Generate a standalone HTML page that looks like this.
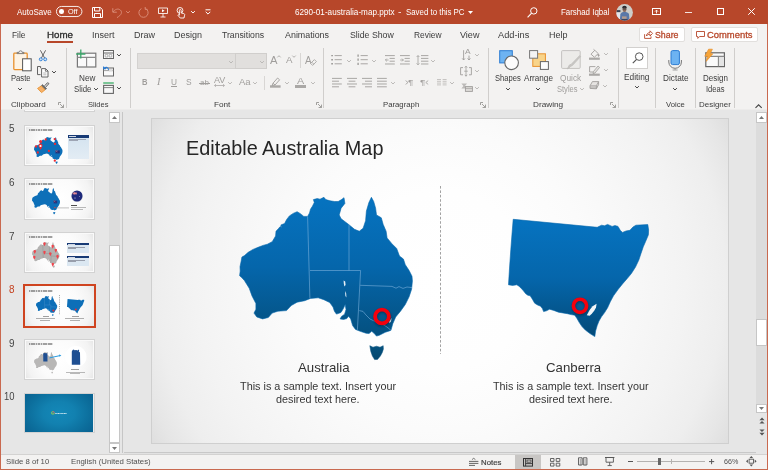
<!DOCTYPE html>
<html lang="en">
<head>
<meta charset="utf-8">
<title>6290-01-australia-map.pptx - PowerPoint</title>
<style>
*{box-sizing:border-box;margin:0;padding:0}
html,body{width:768px;height:470px;overflow:hidden;background:#e6e6e6}
body{font-family:"Liberation Sans","DejaVu Sans",sans-serif;font-size:9px;color:#444;position:relative}
#win{position:absolute;left:0;top:0;width:768px;height:470px;overflow:hidden;background:#e6e6e6}
.abs{position:absolute}
.t{position:absolute;white-space:nowrap;transform-origin:0 50%}
svg{position:absolute;overflow:visible}
#titlebar{position:absolute;left:0;top:0;width:768px;height:24px;background:#b7472a}
#tabs{position:absolute;left:0;top:24px;width:768px;height:23px;background:#f3f2f1}
#ribbon{position:absolute;left:0;top:47px;width:768px;height:63px;background:linear-gradient(#f3f2f1 0,#f3f2f1 61.6px,#eae9e8 63px)}
#status{position:absolute;left:0;top:454px;width:768px;height:16px;background:#f3f2f1;border-top:1px solid #d3d2d1}
.sep{position:absolute;width:1px;background:#d0cecc;top:48px;height:60px}
.frame{position:absolute;pointer-events:none;z-index:50}
</style>
</head>
<body>
<div id="win">
<div class="abs" style="left:0px;top:110px;width:122px;height:344px;background:#e6e6e6"></div>
<div class="abs" style="left:24px;top:80px;width:70.6px;height:32.4px;background:radial-gradient(circle 41px at 50% 50%,#ffffff 0,#fbfbfb 20px,#f3f3f3 32px,#e2e2e2 41px);border:1px solid #d2d2d2;box-shadow:inset 0 0 0 1px #fafafa"></div>
<div class="abs" style="left:24px;top:124.8px;width:70.6px;height:40.9px;background:radial-gradient(circle 41px at 50% 50%,#ffffff 0,#fbfbfb 20px,#f3f3f3 32px,#e2e2e2 41px);border:1px solid #d2d2d2;box-shadow:inset 0 0 0 1px #fafafa"></div>
<span class="t" style="left:9.18px;top:121.49px;font-size:11.00px;line-height:14px;height:14px;color:#444;transform:scaleX(0.898);">5</span>
<div class="abs" style="left:29.4px;top:129px;width:23.4px;height:2.1px;background:repeating-linear-gradient(90deg,#444 0,#444 1.2px,rgba(68,68,68,.35) 1.2px,rgba(68,68,68,.35) 1.7px);opacity:.5"></div>
<svg style="left:33.8px;top:136.5px;" width="40" height="30" viewBox="0 0 40 30"><polygon points="0.1,11.5 0.3,10.5 0.4,9.9 0.8,9.6 1.4,9.1 2.2,8.6 3.2,8.2 3.9,7.9 4.6,7.7 5.4,7.3 5.9,6.4 6.0,5.6 6.4,5.2 6.7,4.8 7.0,5.0 6.8,4.6 7.4,4.3 7.7,3.7 8.2,3.1 8.8,2.7 9.5,2.4 10.0,2.7 10.6,3.2 11.2,3.2 11.5,2.6 11.7,2.0 12.0,1.5 12.3,0.9 12.2,0.4 12.8,0.2 13.3,0.3 13.9,0.0 14.2,0.4 14.9,0.6 15.6,0.7 16.3,0.7 16.8,0.4 17.2,0.1 17.4,1.0 16.7,1.8 16.4,2.9 16.7,3.5 18.0,4.5 19.0,5.3 19.8,5.6 20.4,5.1 20.8,3.9 20.9,2.3 21.3,0.9 21.7,0.0 22.1,0.7 22.4,1.8 22.6,2.9 23.4,3.4 23.7,4.5 24.2,5.6 24.3,6.7 25.1,7.7 25.9,8.4 26.4,9.7 27.0,10.2 27.3,11.1 28.0,12.1 28.4,13.0 28.5,13.8 28.4,15.2 28.0,16.4 27.3,17.7 26.5,18.8 25.8,19.8 25.3,20.9 25.0,22.0 24.0,22.3 23.1,22.8 22.6,22.9 22.2,22.4 21.8,22.1 21.4,22.5 20.9,22.4 19.9,22.1 19.1,21.8 18.6,21.2 18.3,20.1 18.0,19.6 17.7,20.0 17.2,20.1 16.6,20.1 16.8,19.7 17.3,19.3 17.6,18.5 17.4,17.7 17.1,18.4 16.7,19.0 16.3,19.2 16.0,19.3 15.6,18.8 15.4,18.1 14.9,17.4 13.9,16.9 13.0,16.6 11.7,16.7 10.7,17.1 9.5,17.3 8.5,17.9 7.7,18.7 6.3,18.8 5.4,19.1 4.7,19.8 3.8,20.1 2.8,19.8 2.4,19.1 2.7,18.5 2.7,17.5 2.0,16.3 1.6,15.0 0.8,13.7 0.3,13.2 0.0,12.9 0.1,12.2" fill="#0d6fb8"/><polygon points="21.5,24.5 22.0,24.7 22.6,24.6 23.2,24.7 23.7,24.5 23.7,25.0 23.5,25.6 23.2,26.2 22.8,26.7 22.3,26.8 21.9,26.2 21.6,25.4" fill="#0d6fb8"/><circle cx="11.7" cy="2.5" r="1.15" fill="#ee2a32"/><circle cx="20.7" cy="2.1" r="1.15" fill="#ee2a32"/><circle cx="21" cy="6.9" r="1.15" fill="#ee2a32"/><circle cx="2" cy="9.5" r="1.15" fill="#ee2a32"/><circle cx="3.8" cy="15.5" r="1.15" fill="#ee2a32"/><circle cx="14.9" cy="13.9" r="1.15" fill="#ee2a32"/><circle cx="20.8" cy="23.7" r="1.15" fill="#ee2a32"/><circle cx="6.6" cy="4.6" r="1.5" fill="#ee2a32"/><path d="M4.7 9.4 a2 2 0 1 1 3.6 0 L6.7 13 Z" fill="#ee2a32"/><circle cx="6.5" cy="9" r="1.1" fill="#fff"/><rect x="21.4" y="13.4" width="4.4" height="3" fill="#20307a"/><path d="M21.4 13.4 L23.6 15 M23.6 13.4 L21.4 15" stroke="#e88" stroke-width="0.4"/></svg>
<div class="abs" style="left:68.1px;top:135.1px;width:21px;height:2.8px;background:#173a75"></div>
<div class="abs" style="left:68.1px;top:137.9px;width:21px;height:21px;background:linear-gradient(#d5e4f0,#e3ecf4)"></div>
<div class="abs" style="left:69px;top:136.308px;width:7px;height:0.992px;background:#fff;opacity:.8"></div>
<div class="abs" style="left:69px;top:138.932px;width:17px;height:0.868px;background:#667;opacity:.5"></div>
<div class="abs" style="left:69px;top:140.432px;width:9.4px;height:0.868px;background:#667;opacity:.5"></div>
<div class="abs" style="left:24px;top:178.3px;width:70.6px;height:41.3px;background:radial-gradient(circle 41px at 50% 50%,#ffffff 0,#fbfbfb 20px,#f3f3f3 32px,#e2e2e2 41px);border:1px solid #d2d2d2;box-shadow:inset 0 0 0 1px #fafafa"></div>
<span class="t" style="left:9.18px;top:175.29px;font-size:11.00px;line-height:14px;height:14px;color:#444;transform:scaleX(0.898);">6</span>
<div class="abs" style="left:29.4px;top:182.7px;width:23.4px;height:2.1px;background:repeating-linear-gradient(90deg,#444 0,#444 1.2px,rgba(68,68,68,.35) 1.2px,rgba(68,68,68,.35) 1.7px);opacity:.5"></div>
<svg style="left:32.2px;top:188.4px;" width="40" height="30" viewBox="0 0 40 30"><polygon points="0.1,11.2 0.3,10.3 0.4,9.7 0.8,9.4 1.4,8.9 2.2,8.4 3.1,8.1 3.8,7.8 4.5,7.6 5.3,7.2 5.8,6.3 5.9,5.5 6.3,5.1 6.6,4.7 6.8,4.9 6.7,4.5 7.3,4.2 7.6,3.6 8.1,3.0 8.7,2.6 9.3,2.3 9.8,2.6 10.4,3.1 11.0,3.1 11.3,2.5 11.5,1.9 11.8,1.5 12.1,0.8 12.0,0.4 12.6,0.2 13.0,0.3 13.7,0.0 14.0,0.4 14.6,0.6 15.4,0.7 16.0,0.7 16.5,0.4 16.9,0.1 17.1,1.0 16.4,1.8 16.1,2.9 16.4,3.5 17.7,4.4 18.6,5.2 19.4,5.5 20.0,5.0 20.4,3.8 20.5,2.2 20.9,0.8 21.4,0.0 21.7,0.7 22.0,1.8 22.2,2.9 23.0,3.3 23.3,4.4 23.7,5.5 23.9,6.6 24.7,7.5 25.5,8.3 25.9,9.5 26.5,10.0 26.8,10.9 27.5,11.9 27.9,12.8 28.0,13.6 27.9,14.9 27.5,16.1 26.8,17.4 26.1,18.5 25.3,19.4 24.8,20.5 24.5,21.6 23.6,21.9 22.6,22.3 22.2,22.5 21.8,22.0 21.4,21.7 21.0,22.1 20.5,22.0 19.5,21.7 18.8,21.4 18.3,20.8 18.0,19.7 17.7,19.3 17.4,19.7 16.8,19.8 16.3,19.7 16.5,19.3 17.0,18.9 17.2,18.2 17.1,17.4 16.8,18.0 16.4,18.6 16.0,18.8 15.7,18.9 15.4,18.5 15.1,17.8 14.6,17.1 13.7,16.6 12.7,16.3 11.5,16.4 10.5,16.8 9.3,17.0 8.4,17.5 7.6,18.4 6.2,18.5 5.3,18.8 4.6,19.5 3.7,19.7 2.8,19.4 2.3,18.8 2.6,18.1 2.6,17.2 2.0,16.0 1.6,14.7 0.8,13.5 0.3,13.0 0.0,12.7 0.1,11.9" fill="#0d6fb8"/><polygon points="21.1,24.0 21.6,24.3 22.2,24.1 22.7,24.3 23.3,24.0 23.3,24.6 23.1,25.1 22.8,25.7 22.3,26.3 21.9,26.3 21.5,25.7 21.3,25.0" fill="#0d6fb8"/><path d="M23 19.9 H37" stroke="#777" stroke-width="0.45"/><rect x="21.6" y="12.6" width="3.6" height="2.8" fill="#25357e"/><path d="M21.6 12.6 L23.4 14 M23.4 12.6 L21.6 14" stroke="#e66" stroke-width="0.4"/><circle cx="22.8" cy="19.6" r="0.7" fill="#e33"/></svg>
<svg style="left:71.4px;top:190.3px;" width="12" height="12" viewBox="0 0 12 12"><circle cx="6" cy="6.4" r="5.7" fill="#000" opacity="0.12"/><circle cx="6" cy="6" r="5.5" fill="#1f2a7c"/><path d="M1.6 3.4 H6 M3.8 2 V4.8" stroke="#f08a8a" stroke-width="0.9"/><path d="M1.8 2.2 L5.8 4.6 M5.8 2.2 L1.8 4.6" stroke="#e9a" stroke-width="0.4"/><circle cx="4" cy="8" r="0.5" fill="#fff"/><circle cx="8.6" cy="6.4" r="0.4" fill="#fff"/></svg>
<div class="abs" style="left:71px;top:205.246px;width:6px;height:1.054px;background:#222;opacity:.8"></div>
<div class="abs" style="left:71px;top:207.094px;width:14.7px;height:0.806px;background:#777;opacity:.5"></div>
<div class="abs" style="left:71px;top:208.794px;width:12px;height:0.806px;background:#777;opacity:.5"></div>
<div class="abs" style="left:24px;top:232.3px;width:70.6px;height:40.4px;background:radial-gradient(circle 41px at 50% 50%,#ffffff 0,#fbfbfb 20px,#f3f3f3 32px,#e2e2e2 41px);border:1px solid #d2d2d2;box-shadow:inset 0 0 0 1px #fafafa"></div>
<span class="t" style="left:9.18px;top:229.09px;font-size:11.00px;line-height:14px;height:14px;color:#444;transform:scaleX(0.898);">7</span>
<div class="abs" style="left:29.4px;top:236.2px;width:23.4px;height:2.1px;background:repeating-linear-gradient(90deg,#444 0,#444 1.2px,rgba(68,68,68,.35) 1.2px,rgba(68,68,68,.35) 1.7px);opacity:.5"></div>
<svg style="left:32.2px;top:241.6px;" width="40" height="30" viewBox="0 0 40 30"><polygon points="0.1,11.0 0.3,10.1 0.4,9.5 0.8,9.3 1.4,8.7 2.1,8.3 3.0,7.9 3.7,7.6 4.4,7.5 5.2,7.1 5.7,6.2 5.8,5.4 6.2,5.0 6.5,4.6 6.7,4.8 6.6,4.4 7.2,4.2 7.5,3.6 7.9,3.0 8.5,2.6 9.1,2.3 9.6,2.6 10.2,3.0 10.8,3.0 11.1,2.5 11.3,1.9 11.6,1.4 11.9,0.8 11.7,0.4 12.3,0.2 12.8,0.3 13.4,0.0 13.7,0.4 14.4,0.6 15.1,0.7 15.7,0.7 16.2,0.4 16.6,0.1 16.7,1.0 16.1,1.7 15.8,2.8 16.1,3.4 17.3,4.3 18.3,5.1 19.0,5.4 19.6,4.9 20.0,3.7 20.2,2.2 20.6,0.8 21.0,0.0 21.3,0.7 21.6,1.7 21.8,2.8 22.5,3.3 22.8,4.3 23.3,5.4 23.5,6.5 24.2,7.4 25.0,8.1 25.4,9.3 26.0,9.8 26.3,10.7 27.0,11.6 27.4,12.5 27.5,13.3 27.3,14.6 27.0,15.8 26.3,17.0 25.6,18.1 24.8,19.0 24.4,20.1 24.1,21.2 23.2,21.5 22.2,21.9 21.8,22.1 21.4,21.6 21.0,21.3 20.6,21.7 20.1,21.6 19.2,21.3 18.4,21.0 18.0,20.4 17.7,19.3 17.3,18.9 17.0,19.3 16.5,19.4 16.0,19.3 16.2,18.9 16.7,18.6 16.9,17.8 16.8,17.0 16.5,17.7 16.1,18.3 15.7,18.5 15.4,18.6 15.1,18.1 14.9,17.4 14.3,16.7 13.4,16.3 12.5,16.0 11.3,16.1 10.4,16.4 9.1,16.7 8.2,17.2 7.5,18.0 6.1,18.1 5.2,18.4 4.6,19.1 3.7,19.3 2.7,19.0 2.3,18.4 2.6,17.8 2.6,16.9 2.0,15.7 1.5,14.5 0.8,13.2 0.3,12.7 0.0,12.5 0.1,11.7" fill="#b3b2b1"/><polygon points="20.7,23.6 21.2,23.8 21.8,23.7 22.3,23.8 22.8,23.6 22.9,24.1 22.7,24.7 22.4,25.2 21.9,25.8 21.5,25.8 21.1,25.2 20.9,24.5" fill="#b3b2b1"/><path d="M10.8 3 L11.2 16 M11.2 11.6 H19.3 M17.4 4.4 V11.6 M19.3 11.6 L18.8 21 M19.3 14 L27.4 14.4" fill="none" stroke="#8a8a8a" stroke-width="0.4"/><path d="M12.5 4.3 l-1.1 -2.3 a1.25 1.25 0 1 1 2.2 0 Z" fill="#f0444c"/><path d="M20.7 6.8 l-1.1 -2.3 a1.25 1.25 0 1 1 2.2 0 Z" fill="#f0444c"/><path d="M2.8 12.1 l-1.1 -2.3 a1.25 1.25 0 1 1 2.2 0 Z" fill="#f0444c"/><path d="M12.5 12.8 l-1.1 -2.3 a1.25 1.25 0 1 1 2.2 0 Z" fill="#f0444c"/><path d="M18.3 14.3 l-1.1 -2.3 a1.25 1.25 0 1 1 2.2 0 Z" fill="#f0444c"/><path d="M23.8 10.8 l-1.1 -2.3 a1.25 1.25 0 1 1 2.2 0 Z" fill="#f0444c"/><path d="M2.3 17.8 l-1.1 -2.3 a1.25 1.25 0 1 1 2.2 0 Z" fill="#f0444c"/><path d="M25.5 17 l-1.1 -2.3 a1.25 1.25 0 1 1 2.2 0 Z" fill="#f0444c"/><path d="M20.8 24.8 l-1.1 -2.3 a1.25 1.25 0 1 1 2.2 0 Z" fill="#f0444c"/></svg>
<div class="abs" style="left:66.6px;top:242.9px;width:22.3px;height:2.2px;background:#173a75"></div>
<div class="abs" style="left:66.6px;top:245.1px;width:22.3px;height:8px;background:#dbe7f1"></div>
<div class="abs" style="left:67.6px;top:243.77px;width:7.4px;height:0.93px;background:#fff;opacity:.8"></div>
<div class="abs" style="left:67.6px;top:246.694px;width:17px;height:0.806px;background:#556;opacity:.5"></div>
<div class="abs" style="left:67.6px;top:248.194px;width:8.8px;height:0.806px;background:#556;opacity:.5"></div>
<div class="abs" style="left:66.6px;top:255.9px;width:22.3px;height:2.2px;background:#173a75"></div>
<div class="abs" style="left:66.6px;top:258.1px;width:22.3px;height:8px;background:#dbe7f1"></div>
<div class="abs" style="left:67.6px;top:256.77px;width:7.4px;height:0.93px;background:#fff;opacity:.8"></div>
<div class="abs" style="left:67.6px;top:259.694px;width:17px;height:0.806px;background:#556;opacity:.5"></div>
<div class="abs" style="left:67.6px;top:261.194px;width:8.8px;height:0.806px;background:#556;opacity:.5"></div>
<div class="abs" style="left:22.7px;top:284px;width:73.4px;height:44px;background:#cf4420"></div>
<div class="abs" style="left:24.6px;top:285.9px;width:69.6px;height:40.2px;background:#fff"></div>
<div class="abs" style="left:25px;top:286.3px;width:68.8px;height:39.3px;background:radial-gradient(circle 41px at 50% 50%,#ffffff 0,#fbfbfb 20px,#f3f3f3 32px,#e2e2e2 41px);border:0"></div>
<span class="t" style="left:9.18px;top:282.49px;font-size:11.00px;line-height:14px;height:14px;color:#c43e1c;transform:scaleX(0.898);">8</span>
<div class="abs" style="left:29.4px;top:289.7px;width:23.4px;height:2.1px;background:repeating-linear-gradient(90deg,#444 0,#444 1.2px,rgba(68,68,68,.35) 1.2px,rgba(68,68,68,.35) 1.7px);opacity:.5"></div>
<svg style="left:36px;top:295.9px;" width="40" height="30" viewBox="0 0 40 30"><polygon points="0.0,8.5 0.2,7.8 0.3,7.3 0.6,7.2 1.1,6.7 1.6,6.4 2.3,6.1 2.9,5.9 3.4,5.8 4.0,5.4 4.4,4.7 4.5,4.2 4.8,3.8 5.0,3.6 5.2,3.7 5.1,3.4 5.5,3.2 5.8,2.7 6.1,2.3 6.6,2.0 7.1,1.8 7.4,2.0 7.9,2.3 8.3,2.3 8.6,1.9 8.7,1.5 8.9,1.1 9.2,0.6 9.1,0.3 9.5,0.2 9.9,0.2 10.3,0.0 10.6,0.3 11.1,0.4 11.6,0.5 12.1,0.5 12.5,0.3 12.8,0.0 12.9,0.7 12.5,1.3 12.2,2.2 12.5,2.6 13.4,3.3 14.1,3.9 14.7,4.2 15.2,3.8 15.5,2.9 15.6,1.7 15.9,0.6 16.2,0.0 16.5,0.5 16.7,1.3 16.8,2.2 17.4,2.5 17.6,3.3 18.0,4.2 18.1,5.0 18.7,5.7 19.3,6.3 19.6,7.2 20.1,7.6 20.3,8.3 20.8,9.0 21.2,9.7 21.2,10.3 21.1,11.3 20.8,12.2 20.3,13.2 19.7,14.0 19.2,14.7 18.8,15.5 18.6,16.3 17.9,16.6 17.2,16.9 16.8,17.0 16.5,16.7 16.2,16.4 15.9,16.7 15.5,16.7 14.8,16.4 14.2,16.2 13.9,15.7 13.6,14.9 13.4,14.6 13.2,14.9 12.8,15.0 12.3,14.9 12.5,14.6 12.9,14.3 13.1,13.8 13.0,13.2 12.7,13.7 12.4,14.1 12.1,14.3 11.9,14.3 11.6,14.0 11.5,13.5 11.1,12.9 10.3,12.6 9.6,12.3 8.7,12.4 8.0,12.7 7.1,12.9 6.3,13.3 5.8,13.9 4.7,14.0 4.0,14.2 3.5,14.7 2.8,14.9 2.1,14.7 1.8,14.2 2.0,13.7 2.0,13.0 1.5,12.1 1.2,11.2 0.6,10.2 0.2,9.8 0.0,9.6 0.1,9.0" fill="#0d6fb8"/><polygon points="16.0,18.2 16.4,18.4 16.8,18.3 17.2,18.4 17.6,18.2 17.6,18.6 17.5,19.0 17.3,19.5 16.9,19.9 16.6,19.9 16.3,19.5 16.1,18.9" fill="#0d6fb8"/><path d="M8.4 2.4 L8.7 12.4 M8.7 9 H14.9 M13.4 3.4 V9 M14.9 9 L14.5 16.2 M14.9 10.8 L21.2 11.1" fill="none" stroke="#5e9ed2" stroke-width="0.3"/><circle cx="17.4" cy="14.6" r="1" fill="#ee2a32"/></svg>
<svg style="left:67.3px;top:298.6px;" width="40" height="30" viewBox="0 0 40 30"><polygon points="0.6,0.0 10.9,1.0 11.4,0.7 11.8,0.8 12.2,0.6 12.7,0.9 13.1,0.8 13.4,0.9 13.7,1.4 14.0,1.6 14.4,1.4 14.9,1.3 15.3,0.9 15.6,0.7 17.1,0.7 17.2,1.3 17.2,1.9 16.8,2.7 16.5,3.4 16.3,4.2 16.0,5.0 15.6,5.9 15.1,6.7 14.5,7.3 14.0,7.9 13.4,8.6 12.9,9.4 12.5,10.1 12.2,10.8 11.8,11.4 11.4,11.9 11.1,12.5 10.9,13.0 10.7,13.7 10.6,14.4 10.0,14.0 9.4,13.6 9.0,13.2 8.7,12.7 8.4,12.2 8.1,11.8 7.7,11.7 7.2,11.6 6.1,11.4 5.6,11.2 5.0,11.0 4.7,11.2 4.3,11.3 4.2,11.0 3.9,10.7 3.6,10.5 3.2,10.3 2.9,9.8 2.7,9.4 2.4,9.3 2.1,9.1 1.8,8.8 1.6,8.5 1.3,8.2 1.0,8.0 0.5,8.1 0.0,8.0 0.1,5.9 0.3,3.7 0.4,1.8" fill="#0d6fb8"/><circle cx="8.8" cy="10.6" r="1" fill="#ee2a32"/></svg>
<svg style="left:59.1px;top:294.8px;" width="1" height="20" viewBox="0 0 1 20"><path d="M0.5 0 V20" stroke="#555" stroke-width="0.5" stroke-dasharray="1.1 1.1"/></svg>
<div class="abs" style="left:42.6px;top:315.546px;width:6.3px;height:1.054px;background:#444;opacity:.5"></div>
<div class="abs" style="left:35.9px;top:317.963px;width:18.7px;height:0.837px;background:#666;opacity:.5"></div>
<div class="abs" style="left:40.2px;top:319.663px;width:9.8px;height:0.837px;background:#666;opacity:.5"></div>
<div class="abs" style="left:72px;top:315.546px;width:6.5px;height:1.054px;background:#444;opacity:.5"></div>
<div class="abs" style="left:65.4px;top:317.963px;width:18.6px;height:0.837px;background:#666;opacity:.5"></div>
<div class="abs" style="left:70px;top:319.663px;width:10px;height:0.837px;background:#666;opacity:.5"></div>
<div class="abs" style="left:24px;top:339.3px;width:70.6px;height:40.4px;background:radial-gradient(circle 41px at 50% 50%,#ffffff 0,#fbfbfb 20px,#f3f3f3 32px,#e2e2e2 41px);border:1px solid #d2d2d2;box-shadow:inset 0 0 0 1px #fafafa"></div>
<span class="t" style="left:9.18px;top:335.99px;font-size:11.00px;line-height:14px;height:14px;color:#444;transform:scaleX(0.898);">9</span>
<div class="abs" style="left:29.4px;top:343.2px;width:23.4px;height:2.1px;background:repeating-linear-gradient(90deg,#444 0,#444 1.2px,rgba(68,68,68,.35) 1.2px,rgba(68,68,68,.35) 1.7px);opacity:.5"></div>
<svg style="left:33.8px;top:352px;" width="40" height="30" viewBox="0 0 40 30"><polygon points="0.1,9.2 0.2,8.4 0.3,7.9 0.6,7.7 1.1,7.3 1.8,6.9 2.5,6.6 3.1,6.4 3.7,6.2 4.3,5.9 4.8,5.1 4.8,4.5 5.2,4.1 5.4,3.9 5.6,4.0 5.5,3.7 6.0,3.5 6.2,3.0 6.6,2.5 7.1,2.1 7.6,1.9 8.0,2.1 8.5,2.5 9.0,2.5 9.3,2.1 9.4,1.6 9.6,1.2 9.9,0.7 9.8,0.3 10.3,0.2 10.7,0.3 11.2,0.0 11.4,0.3 12.0,0.5 12.6,0.6 13.1,0.6 13.5,0.3 13.8,0.1 14.0,0.8 13.4,1.4 13.2,2.3 13.4,2.8 14.5,3.6 15.2,4.2 15.9,4.5 16.4,4.1 16.7,3.1 16.8,1.8 17.1,0.7 17.5,0.0 17.8,0.6 18.0,1.4 18.1,2.3 18.8,2.7 19.0,3.6 19.4,4.5 19.5,5.4 20.2,6.1 20.8,6.8 21.2,7.8 21.7,8.2 22.0,8.9 22.5,9.7 22.8,10.5 22.9,11.1 22.8,12.2 22.5,13.2 22.0,14.2 21.3,15.1 20.7,15.9 20.3,16.7 20.0,17.6 19.3,17.9 18.5,18.3 18.1,18.4 17.8,18.0 17.5,17.8 17.1,18.1 16.7,18.0 16.0,17.8 15.4,17.5 15.0,17.0 14.7,16.1 14.4,15.8 14.2,16.1 13.8,16.2 13.3,16.1 13.5,15.8 13.9,15.5 14.1,14.9 14.0,14.2 13.8,14.7 13.4,15.3 13.1,15.4 12.8,15.5 12.6,15.1 12.4,14.5 11.9,14.0 11.2,13.6 10.4,13.3 9.4,13.4 8.6,13.7 7.6,13.9 6.9,14.3 6.2,15.0 5.1,15.1 4.3,15.3 3.8,15.9 3.0,16.1 2.3,15.9 1.9,15.3 2.2,14.8 2.2,14.1 1.6,13.1 1.3,12.0 0.6,11.0 0.3,10.6 0.0,10.4 0.1,9.8" fill="#b8b7b6"/><polygon points="17.3,19.7 17.7,19.9 18.1,19.7 18.6,19.9 19.0,19.7 19.1,20.1 18.9,20.6 18.7,21.0 18.3,21.5 17.9,21.5 17.6,21.0 17.4,20.4" fill="#b8b7b6"/><path d="M9.2 1.4 L10.4 0.9 L12.2 1.3 L13.4 1.2 L13.5 9.4 H9.3 Z" fill="#1f4f92"/><path d="M15.5 5.9 L26 3.6" stroke="#2a9be0" stroke-width="1"/><path d="M25 2.6 L27.4 3.3 L25.6 4.8 Z" fill="#2a9be0"/></svg>
<svg style="left:64.6px;top:346px;" width="22" height="22" viewBox="0 0 22 22"><circle cx="10.8" cy="10.8" r="10.7" fill="#fff"/><path d="M6.8 5.4 L7.6 4 L8.8 3.6 L9.6 4.2 L11.2 4 L12.6 4.4 L13.6 3.6 L14.2 4.4 L13.8 5.6 L15 6.6 L15.2 18.8 H6.8 Z" fill="#1f4f92"/></svg>
<div class="abs" style="left:70.6px;top:369.208px;width:8.8px;height:0.992px;background:#444;opacity:.5"></div>
<div class="abs" style="left:66px;top:371.894px;width:18.5px;height:0.806px;background:#777;opacity:.5"></div>
<div class="abs" style="left:70px;top:373.194px;width:10px;height:0.806px;background:#777;opacity:.5"></div>
<div class="abs" style="left:24px;top:392.6px;width:70.6px;height:40.9px;background:#ededed;border:1px solid #d2d2d2"></div>
<div class="abs" style="left:25.3px;top:393.8px;width:68.2px;height:38.2px;background:radial-gradient(ellipse 58% 75% at 50% 50%,#1488b8 0%,#1281b0 40%,#0c6e9c 80%,#0a6594 100%)"></div>
<span class="t" style="left:4.18px;top:389.39px;font-size:11.00px;line-height:14px;height:14px;color:#444;transform:scaleX(0.857);">10</span>
<svg style="left:51px;top:411.4px;" width="4" height="4" viewBox="0 0 4 4"><circle cx="1.9" cy="1.9" r="1.7" fill="#9ccf4a"/><path d="M1.9 0.2 A1.7 1.7 0 0 1 3.6 1.9 H1.9 Z" fill="#d44a7a"/><circle cx="1.9" cy="1.9" r="0.8" fill="#1a7fb0"/></svg>
<span class="t" style="left:54.75px;top:410.87px;font-size:2.40px;line-height:5px;height:5px;color:#fff;font-weight:700;transform:scaleX(0.950);">SlideModel</span>
<div class="abs" style="left:109px;top:122px;width:11px;height:322px;background:#dcdcdc"></div>
<div class="abs" style="left:109px;top:112px;width:11px;height:11px;background:#fff;border:1px solid #c6c6c6"></div>
<svg style="left:112px;top:116.2px;" width="5" height="3" viewBox="0 0 5 3"><path d="M0 3 L2.5 0 L5 3 Z" fill="#777"/></svg>
<div class="abs" style="left:109px;top:245px;width:11px;height:198px;background:#fff;border:1px solid #c6c6c6"></div>
<div class="abs" style="left:109px;top:443px;width:11px;height:10px;background:#fff;border:1px solid #c6c6c6"></div>
<svg style="left:112px;top:446.8px;" width="5" height="3" viewBox="0 0 5 3"><path d="M0 0 L2.5 3 L5 0 Z" fill="#777"/></svg>
<div class="abs" style="left:121px;top:110px;width:647px;height:344px;background:#e6e6e6"></div>
<div class="abs" style="left:122px;top:112px;width:1px;height:341px;background:#c6c6c6"></div>
<div class="abs" style="left:124px;top:452px;width:643px;height:1px;background:#c8c8c8"></div>
<div class="abs" style="left:123px;top:453px;width:644px;height:1px;background:#e2e2e2"></div>
<div class="abs" style="left:151px;top:118px;width:578px;height:326px;background:radial-gradient(circle 340px at 50% 50%,#ffffff 0,#fefefe 90px,#fbfbfb 150px,#f7f7f7 200px,#f3f3f3 245px,#eeeeee 285px,#e6e6e6 312px,#dedede 332px,#dbdbdb 340px);border:1px solid #cfcfcf"></div>
<span class="t" style="left:186.19px;top:137.23px;font-size:20.40px;line-height:23px;height:23px;color:#262626;transform:scaleX(0.973);">Editable Australia Map</span>
<svg style="left:440px;top:186px;" width="1" height="168" viewBox="0 0 1 168"><path d="M0.5 0 V168" stroke="#8a8a8a" stroke-width="0.8" stroke-dasharray="2.6 1.8" fill="none"/></svg>
<svg style="left:0;top:0" width="768" height="470" viewBox="0 0 768 470"><defs><linearGradient id="gA" x1="0" y1="0" x2="0" y2="1"><stop offset="0" stop-color="#0673c0"/><stop offset="0.5" stop-color="#0566ab"/><stop offset="1" stop-color="#04507f"/></linearGradient><linearGradient id="gT" x1="0" y1="0" x2="0" y2="1"><stop offset="0" stop-color="#05527f"/><stop offset="1" stop-color="#04476f"/></linearGradient><linearGradient id="gN" x1="0" y1="0" x2="0" y2="1"><stop offset="0" stop-color="#0673c0"/><stop offset="0.5" stop-color="#0566ab"/><stop offset="1" stop-color="#034a78"/></linearGradient><filter id="sh" x="-40%" y="-40%" width="180%" height="180%"><feGaussianBlur stdDeviation="1.1"/></filter></defs><polygon points="240.0,266.7 241.2,261.0 241.9,257.1 244.5,255.6 248.2,252.3 253.0,249.4 258.7,247.1 263.0,245.4 267.4,244.2 272.2,241.7 275.6,236.0 276.0,231.2 278.5,228.6 280.2,226.5 281.8,227.4 280.8,225.0 284.6,223.5 286.5,219.7 289.4,215.9 293.2,213.4 297.1,211.7 300.0,213.4 303.8,216.4 307.6,216.4 309.5,213.0 310.5,209.2 312.4,206.3 314.3,202.5 313.4,199.6 317.2,198.6 320.0,199.2 323.9,197.3 325.8,199.6 330.0,200.8 334.4,201.5 338.2,201.5 341.5,199.6 344.0,197.7 344.9,203.4 341.1,208.2 339.2,214.9 341.1,218.7 348.7,224.5 354.5,229.3 359.3,231.2 363.1,228.3 365.6,220.7 366.4,211.1 368.9,202.5 371.4,197.3 373.7,201.5 375.6,208.2 376.5,214.9 381.3,217.8 383.2,224.5 386.1,231.2 387.1,237.9 391.9,243.7 396.7,248.5 399.5,256.1 403.4,259.0 405.3,264.7 409.1,270.5 412.0,276.2 412.4,281.0 411.6,289.2 409.1,296.8 405.3,304.5 400.5,311.2 395.7,317.0 392.8,323.7 390.9,330.4 385.2,332.3 379.4,335.2 376.5,336.1 374.0,333.2 371.7,331.3 369.0,333.6 366.0,333.2 360.2,331.3 355.5,329.4 352.6,325.6 350.7,318.9 348.6,316.2 346.8,318.6 343.6,319.4 340.1,318.9 341.5,316.4 344.6,314.2 346.0,309.5 345.2,304.5 343.4,308.6 341.0,312.4 338.2,313.6 336.4,314.1 334.4,311.2 333.0,307.0 329.7,302.6 323.9,299.7 318.2,297.8 310.5,298.4 304.7,300.7 297.1,302.2 291.3,305.5 286.5,310.6 277.9,311.2 272.2,313.1 268.3,317.5 262.6,318.9 256.8,317.0 254.0,313.1 255.9,309.3 255.9,303.5 252.0,295.9 249.2,288.2 244.4,280.5 241.6,277.4 239.6,275.7 240.2,271.0" fill="url(#gA)" stroke="#0566ab" stroke-width="0.6" stroke-linejoin="round"/><polygon points="369.8,345.7 373.0,347.2 376.5,346.2 380.0,347.2 383.2,345.7 383.4,349.0 382.3,352.4 380.4,356.0 377.5,359.4 374.6,359.6 372.4,356.0 370.8,351.4" fill="url(#gT)" stroke="#07507f" stroke-width="0.5" stroke-linejoin="round"/><path d="M307.6 216.6 L309.9 298.2 M310 270.5 H360.6 M349 225.2 V270.5 M360.6 270.5 L357.4 329.8 M360.2 285.3 L392 286.4 L396 288.2 L399 286.6 L403 288.4 L407 287 L412 287.6 M359.3 310.6 L363 311.4 L366 315 L370 319 L373.7 320.8 L378 322 L383 324.6 L387 327 L391 330.4" fill="none" stroke="#7ab0dc" stroke-width="0.6"/><path d="M343.6 280.4 L345.2 281.6 L345.6 285 L344.4 286.4 L343.8 283.4 Z M345 291 L346.2 293.4 L346.4 297.6 L345.4 296 Z" fill="#e9f1f8"/><path d="M389 321.4 L391.6 318 L391 321.6 L389.4 323.2 Z" fill="#eef3f8"/><circle cx="382.3" cy="317.8" r="6.9" fill="none" stroke="#03223a" stroke-opacity="0.55" stroke-width="3.8" filter="url(#sh)"/><circle cx="382" cy="316.5" r="6.9" fill="none" stroke="#f5000c" stroke-width="3.8"/><polygon points="513.2,219.3 597.2,227.3 601.6,225.2 604.5,225.8 607.6,224.4 612.1,226.4 615.0,225.6 618.0,226.4 620.4,230.6 622.5,232.4 626.0,231.0 629.9,230.3 633.0,227.0 635.9,225.2 647.8,224.6 648.6,230.0 648.4,234.8 645.6,241.5 643.3,246.7 641.0,253.4 638.8,260.1 635.5,267.0 631.4,273.5 627.0,278.8 622.5,283.9 618.0,289.6 613.5,295.8 610.4,301.6 607.6,307.7 604.6,312.6 601.6,316.6 599.0,321.0 597.2,325.6 595.6,331.0 594.8,336.6 590.0,333.6 585.3,330.0 582.0,326.6 579.3,322.6 577.0,318.6 574.8,315.2 571.0,314.6 567.4,313.7 558.5,312.2 553.8,310.4 549.5,309.2 546.5,310.8 543.6,311.6 542.4,308.6 540.6,306.2 537.6,305.0 534.7,303.2 532.4,299.2 530.2,295.8 527.8,295.2 525.7,293.7 523.4,290.8 521.3,288.4 519.0,286.2 516.8,284.8 512.6,285.4 508.5,284.8 509.6,267.0 510.8,249.7 512.0,234.0" fill="url(#gN)" stroke="#0566ab" stroke-width="0.6" stroke-linejoin="round"/><path d="M586.8 315.2 L589.6 310 L592.6 306.2 L596.6 303.8 L596 307.6 L594.2 310.7 L592 313.6 L589.7 315.7 Z" fill="#f3f6f9"/><circle cx="580.3" cy="307.1" r="6.6" fill="none" stroke="#03223a" stroke-opacity="0.55" stroke-width="3.6" filter="url(#sh)"/><circle cx="580" cy="305.8" r="6.6" fill="none" stroke="#f5000c" stroke-width="3.6"/></svg>
<span class="t" style="left:297.64px;top:360.20px;font-size:13.00px;line-height:16px;height:16px;color:#333;transform:scaleX(1.018);">Australia</span>
<span class="t" style="left:240.38px;top:379.25px;font-size:11.10px;line-height:14px;height:14px;color:#363636;transform:scaleX(0.978);">This is a sample text. Insert your</span>
<span class="t" style="left:276.18px;top:391.95px;font-size:11.10px;line-height:14px;height:14px;color:#363636;transform:scaleX(0.975);">desired text here.</span>
<span class="t" style="left:546.24px;top:360.20px;font-size:13.00px;line-height:16px;height:16px;color:#333;transform:scaleX(1.018);">Canberra</span>
<span class="t" style="left:493.28px;top:379.25px;font-size:11.10px;line-height:14px;height:14px;color:#363636;transform:scaleX(0.974);">This is a sample text. Insert your</span>
<span class="t" style="left:529.08px;top:391.95px;font-size:11.10px;line-height:14px;height:14px;color:#363636;transform:scaleX(0.975);">desired text here.</span>
<div class="abs" style="left:756px;top:110px;width:11px;height:344px;background:#e6e6e6"></div>
<div class="abs" style="left:756.2px;top:122px;width:10.4px;height:282px;background:#dcdcdc"></div>
<div class="abs" style="left:756px;top:112px;width:11px;height:11px;background:#fff;border:1px solid #c6c6c6"></div>
<svg style="left:759px;top:115.6px;" width="5" height="3" viewBox="0 0 5 3"><path d="M0 3 L2.5 0 L5 3 Z" fill="#777"/></svg>
<div class="abs" style="left:756.2px;top:319.2px;width:10.4px;height:27.3px;background:#fff;border:1px solid #c6c6c6"></div>
<div class="abs" style="left:756px;top:404px;width:11px;height:9.4px;background:#fff;border:1px solid #c6c6c6"></div>
<svg style="left:759px;top:407.2px;" width="5" height="3" viewBox="0 0 5 3"><path d="M0 0 L2.5 3 L5 0 Z" fill="#777"/></svg>
<svg style="left:758.6px;top:416.5px;" width="6" height="7" viewBox="0 0 6 7"><path d="M0.4 3.2 L3 0.6 L5.6 3.2 Z M0.4 6.6 L3 4 L5.6 6.6 Z" fill="#555"/></svg>
<svg style="left:758.6px;top:428.5px;" width="6" height="7" viewBox="0 0 6 7"><path d="M0.4 0.4 L3 3 L5.6 0.4 Z M0.4 3.8 L3 6.4 L5.6 3.8 Z" fill="#555"/></svg>
<div id="titlebar"></div>
<div id="tabs"></div>
<div id="ribbon"></div>
<div id="status"></div>
<span class="t" style="left:16.72px;top:5.68px;font-size:9.00px;line-height:12px;height:12px;color:#fff;transform:scaleX(0.886);">AutoSave</span>
<svg style="left:55.6px;top:6px;" width="26.4" height="11" viewBox="0 0 26.4 11"><rect x="0.45" y="0.45" width="25.5" height="10.1" rx="5.05" fill="none" stroke="#fff" stroke-width="0.9"/></svg>
<div class="abs" style="left:59px;top:9.2px;width:4.6px;height:4.6px;background:#fff;border-radius:50%"></div>
<span class="t" style="left:68.35px;top:6.80px;font-size:7.50px;line-height:10px;height:10px;color:#fff;transform:scaleX(0.962);">Off</span>
<svg style="left:92px;top:7px;" width="11" height="11" viewBox="0 0 11 11"><path d="M0.5 0.5 H8.3 L10.5 2.7 V10.5 H0.5 Z" fill="none" stroke="#fff"/><path d="M2.5 0.5 V4 H7.8 V0.5 M2.5 10.5 V6.5 H8.5 V10.5" fill="none" stroke="#fff"/></svg>
<svg style="left:112px;top:7px;" width="11" height="11" viewBox="0 0 11 11"><path d="M0.8 1.2 V5.2 H4.8" fill="none" stroke="#d98a75" stroke-width="1"/><path d="M1 5 C3 2.2 6.2 1.2 8.3 3 C10.6 5 9.6 8 5 10.6" fill="none" stroke="#d98a75" stroke-width="1"/></svg>
<svg style="left:125px;top:10.2px;" width="6" height="4" viewBox="0 0 6 4"><path d="M1.1 1.1 L3 3 L4.9 1.1" fill="none" stroke="#d98a75" stroke-width="0.95"/></svg>
<svg style="left:138px;top:7px;" width="11" height="11" viewBox="0 0 11 11"><path d="M7.6 1.6 A4.6 4.6 0 1 1 3.4 1.6" fill="none" stroke="#d98a75" stroke-width="1"/><path d="M7.2 0 V2.4 H9.6" fill="none" stroke="#d98a75" stroke-width="1"/></svg>
<svg style="left:158px;top:7px;" width="11" height="11" viewBox="0 0 11 11"><path d="M0.5 1 H9.5 V6.5 H0.5 Z M5 6.5 V10 M2.5 10 H7.5" fill="none" stroke="#fff" stroke-width="0.85"/><path d="M4 2.3 L6.6 3.75 L4 5.2 Z" fill="#fff"/></svg>
<svg style="left:175.5px;top:7px;" width="10" height="12" viewBox="0 0 10 12"><circle cx="4" cy="3.4" r="2.9" fill="none" stroke="#fff" stroke-width="0.9"/><path d="M3.4 8.2 V3.4 a0.9 0.9 0 0 1 1.8 0 V6 L7.8 6.6 C8.6 6.9 8.8 7.3 8.6 8.2 L8 11 H4.2 L2 8.4 C1.8 7.8 2.6 7.4 3.4 8.2 Z" fill="#b7472a" stroke="#fff" stroke-width="0.9"/></svg>
<svg style="left:189.5px;top:10.4px;" width="6" height="4" viewBox="0 0 6 4"><path d="M1.1 1.1 L3 3 L4.9 1.1" fill="none" stroke="#fff" stroke-width="0.95"/></svg>
<svg style="left:205px;top:9px;" width="6" height="6" viewBox="0 0 6 6"><path d="M0.5 0.8 H5.5" stroke="#fff" stroke-width="1"/><path d="M0.7 2.8 L3 5.1 L5.3 2.8" fill="none" stroke="#fff" stroke-width="1"/></svg>
<span class="t" style="left:294.52px;top:6.08px;font-size:9.00px;line-height:12px;height:12px;color:#fff;transform:scaleX(0.905);">6290-01-australia-map.pptx</span>
<span class="t" style="left:398.42px;top:6.08px;font-size:9.00px;line-height:12px;height:12px;color:#fff;transform:scaleX(1.167);">-</span>
<span class="t" style="left:405.52px;top:6.08px;font-size:9.00px;line-height:12px;height:12px;color:#fff;transform:scaleX(0.873);">Saved to this PC</span>
<svg style="left:468px;top:11px;" width="5" height="3" viewBox="0 0 5 3"><path d="M0 0 H5 L2.5 3 Z" fill="#fff"/></svg>
<svg style="left:527px;top:7px;" width="11" height="11" viewBox="0 0 11 11"><circle cx="6.8" cy="3.9" r="3.2" fill="none" stroke="#fff" stroke-width="1"/><path d="M4.6 6.2 L0.6 10.3" stroke="#fff" stroke-width="1.1"/></svg>
<span class="t" style="left:560.62px;top:6.08px;font-size:9.00px;line-height:12px;height:12px;color:#fff;transform:scaleX(0.879);">Farshad Iqbal</span>
<svg style="left:616px;top:4px;" width="17" height="17" viewBox="0 0 17 17"><defs><clipPath id="av"><circle cx="8.6" cy="8.4" r="8.3"/></clipPath><filter id="avb" x="-10%" y="-10%" width="120%" height="120%"><feGaussianBlur stdDeviation="0.45"/></filter></defs><g clip-path="url(#av)"><rect width="17" height="17" fill="#cdcdc9"/><g filter="url(#avb)"><rect x="0" y="9" width="4.5" height="8" fill="#e4e6ee"/><rect x="0.4" y="6.2" width="4" height="1.7" fill="#2b3245"/><path d="M3.8 17 L4.4 10 C5.4 8.4 7 8 8.6 7.8 C10.4 8 12 8.6 13 10 L13.6 17 Z" fill="#5a78a8"/><ellipse cx="8.5" cy="5.4" rx="1.9" ry="2.5" fill="#8a6a5c"/><path d="M6.2 4.2 C6.2 1 10.8 1 10.8 4.2 C9.6 3.5 7.4 3.5 6.2 4.2 Z" fill="#26262c"/><path d="M6.6 4.9 H10.4" stroke="#2a2a30" stroke-width="0.8"/><path d="M6 12.4 H10.6 V14.8 H6 Z" fill="#b59b8c"/><path d="M5.4 15 H11.6 V17 H5.4 Z" fill="#3a4560"/></g></g></svg>
<svg style="left:652px;top:8px;" width="9" height="7" viewBox="0 0 9 7"><rect x="0.5" y="0.5" width="8" height="6" fill="none" stroke="#fff"/><path d="M4.5 5.4 V2.2 M3 3.6 L4.5 2.1 L6 3.6" fill="none" stroke="#fff" stroke-width="0.9"/></svg>
<div class="abs" style="left:685px;top:11.5px;width:7px;height:1px;background:#fff;opacity:.85"></div>
<div class="abs" style="left:716.5px;top:8px;width:7px;height:7px;border:1px solid #fff"></div>
<svg style="left:748px;top:8px;" width="7" height="7" viewBox="0 0 7 7"><path d="M0.2 0.2 L6.8 6.8 M6.8 0.2 L0.2 6.8" stroke="#fff" stroke-width="1"/></svg>
<span class="t" style="left:12.11px;top:28.37px;font-size:9.60px;line-height:13px;height:13px;color:#3c3c3c;transform:scaleX(0.873);">File</span>
<span class="t" style="left:47.30px;top:28.30px;font-size:9.80px;line-height:13px;height:13px;color:#2b2b2b;transform:scaleX(0.995);-webkit-text-stroke:0.3px #2b2b2b;">Home</span>
<span class="t" style="left:91.81px;top:28.37px;font-size:9.60px;line-height:13px;height:13px;color:#3c3c3c;transform:scaleX(0.938);">Insert</span>
<span class="t" style="left:133.81px;top:28.37px;font-size:9.60px;line-height:13px;height:13px;color:#3c3c3c;transform:scaleX(0.938);">Draw</span>
<span class="t" style="left:173.51px;top:28.37px;font-size:9.60px;line-height:13px;height:13px;color:#3c3c3c;transform:scaleX(0.937);">Design</span>
<span class="t" style="left:221.51px;top:28.37px;font-size:9.60px;line-height:13px;height:13px;color:#3c3c3c;transform:scaleX(0.904);">Transitions</span>
<span class="t" style="left:284.81px;top:28.37px;font-size:9.60px;line-height:13px;height:13px;color:#3c3c3c;transform:scaleX(0.927);">Animations</span>
<span class="t" style="left:349.81px;top:28.37px;font-size:9.60px;line-height:13px;height:13px;color:#3c3c3c;transform:scaleX(0.913);">Slide Show</span>
<span class="t" style="left:413.51px;top:28.37px;font-size:9.60px;line-height:13px;height:13px;color:#3c3c3c;transform:scaleX(0.874);">Review</span>
<span class="t" style="left:459.61px;top:28.37px;font-size:9.60px;line-height:13px;height:13px;color:#3c3c3c;transform:scaleX(0.941);">View</span>
<span class="t" style="left:498.01px;top:28.37px;font-size:9.60px;line-height:13px;height:13px;color:#3c3c3c;transform:scaleX(0.962);">Add-ins</span>
<span class="t" style="left:548.51px;top:28.37px;font-size:9.60px;line-height:13px;height:13px;color:#3c3c3c;transform:scaleX(0.937);">Help</span>
<div class="abs" style="left:47.3px;top:41px;width:26px;height:1.6px;background:#b7472a"></div>
<div class="abs" style="left:639px;top:26.5px;width:45.5px;height:15.5px;background:#fff;border:1px solid #e1dfdd;border-radius:2px"></div>
<svg style="left:643.5px;top:29.5px;" width="9" height="9" viewBox="0 0 9 9"><path d="M0.6 4.2 V8.4 H7 V6.4" fill="none" stroke="#b7472a" stroke-width="0.9"/><path d="M2.4 6 C2.6 3.6 4.2 2.6 6 2.6 V0.8 L8.6 3.4 L6 6 V4.2 C4.6 4.2 3.4 4.6 2.4 6 Z" fill="none" stroke="#b7472a" stroke-width="0.9" stroke-linejoin="round"/></svg>
<span class="t" style="left:654.81px;top:28.27px;font-size:9.60px;line-height:13px;height:13px;color:#b7472a;transform:scaleX(0.918);-webkit-text-stroke:0.3px #b7472a;">Share</span>
<div class="abs" style="left:690.8px;top:26.5px;width:67.7px;height:15.5px;background:#fff;border:1px solid #e1dfdd;border-radius:2px"></div>
<svg style="left:695.5px;top:30.5px;" width="9" height="8" viewBox="0 0 9 8"><path d="M0.5 0.5 H8.5 V5.5 H3.6 L1.8 7.4 V5.5 H0.5 Z" fill="none" stroke="#b7472a" stroke-width="0.9" stroke-linejoin="round"/></svg>
<span class="t" style="left:706.81px;top:28.27px;font-size:9.60px;line-height:13px;height:13px;color:#b7472a;transform:scaleX(0.981);-webkit-text-stroke:0.3px #b7472a;">Comments</span>
<svg style="left:13px;top:49.5px;" width="19" height="22" viewBox="0 0 19 22"><rect x="0.8" y="3.2" width="13.4" height="16.4" rx="0.8" fill="#fdf3e4" stroke="#e8912d" stroke-width="1.3"/><path d="M4 3.6 V2.4 H6 a1.6 1.6 0 0 1 3.2 0 H11 V3.6 Z" fill="#f3f2f1" stroke="#777" stroke-width="0.9"/><rect x="9.6" y="8.8" width="8.6" height="12" fill="#fff" stroke="#555" stroke-width="1"/></svg>
<span class="t" style="left:11.13px;top:72.59px;font-size:8.40px;line-height:11px;height:11px;color:#3c3c3c;transform:scaleX(0.915);">Paste</span>
<svg style="left:17.3px;top:87px;" width="6" height="4" viewBox="0 0 6 4"><path d="M1.1 1.1 L3 3 L4.9 1.1" fill="none" stroke="#3c3c3c" stroke-width="0.95"/></svg>
<svg style="left:39px;top:49.5px;" width="8" height="11.5" viewBox="0 0 8 11.5"><path d="M1.4 0.3 L5.6 8 M6.6 0.3 L2.4 8" stroke="#555" stroke-width="0.9" fill="none"/><circle cx="1.8" cy="9.3" r="1.5" fill="#cfe3f7" stroke="#2b7cd3" stroke-width="0.9"/><circle cx="6.2" cy="9.3" r="1.5" fill="#cfe3f7" stroke="#2b7cd3" stroke-width="0.9"/></svg>
<svg style="left:37px;top:65.5px;" width="12" height="11.5" viewBox="0 0 12 11.5"><path d="M3.6 2.2 V0.5 H0.5 V8.6 H3.6" fill="none" stroke="#555" stroke-width="0.9"/><path d="M4.6 2.6 H8.6 L11 5 V11 H4.6 Z" fill="#fff" stroke="#555" stroke-width="0.9"/><path d="M8.4 2.8 V5.2 H10.8" fill="none" stroke="#555" stroke-width="0.8"/><path d="M6.2 7 H9.4 M6.2 8.8 H9.4" stroke="#999" stroke-width="0.7"/></svg>
<svg style="left:51.3px;top:69.6px;" width="6" height="4" viewBox="0 0 6 4"><path d="M1.1 1.1 L3 3 L4.9 1.1" fill="none" stroke="#3c3c3c" stroke-width="0.95"/></svg>
<svg style="left:37px;top:82px;" width="12" height="11" viewBox="0 0 12 11"><path d="M7.6 3.8 L10.4 0.8 a0.9 0.9 0 0 1 1.2 1.2 L8.8 5" fill="#ddd" stroke="#555" stroke-width="0.9"/><path d="M5.4 2.6 L9.6 6.6 L8.4 7.6 L4.4 3.6 Z" fill="#666" stroke="#555" stroke-width="0.6"/><path d="M4.2 4 L8 7.8 L4.6 10.6 L0.6 6.4 Z" fill="#f6b26b" stroke="#e8912d" stroke-width="0.9" stroke-linejoin="round"/></svg>
<span class="t" style="left:10.64px;top:99.33px;font-size:8.00px;line-height:11px;height:11px;color:#3c3c3c;transform:scaleX(1.016);">Clipboard</span>
<svg style="left:57.8px;top:102.3px;" width="6" height="6" viewBox="0 0 6 6"><path d="M0.5 3 V0.5 H3" fill="none" stroke="#8c8a88" stroke-width="0.8"/><path d="M2 2 L5.4 5.4 M5.5 2.6 V5.5 H2.6" fill="none" stroke="#8c8a88" stroke-width="0.8"/></svg>
<div class="sep" style="left:66px"></div>
<svg style="left:76px;top:48.5px;" width="21" height="19" viewBox="0 0 21 19"><rect x="1.4" y="4.2" width="18.4" height="13.8" fill="#fafafa" stroke="#777" stroke-width="1.2"/><path d="M1.4 8.4 H19.8 M10.6 8.4 V18" stroke="#8a8a8a" stroke-width="1.1" fill="none"/><path d="M4.8 0.4 V9.6 M0.2 5 H9.4" stroke="#3aa66a" stroke-width="1.3"/></svg>
<span class="t" style="left:78.63px;top:72.59px;font-size:8.40px;line-height:11px;height:11px;color:#3c3c3c;transform:scaleX(0.978);">New</span>
<span class="t" style="left:74.33px;top:83.89px;font-size:8.40px;line-height:11px;height:11px;color:#3c3c3c;transform:scaleX(0.934);">Slide</span>
<svg style="left:92.8px;top:87px;" width="6" height="4" viewBox="0 0 6 4"><path d="M1.1 1.1 L3 3 L4.9 1.1" fill="none" stroke="#3c3c3c" stroke-width="0.95"/></svg>
<svg style="left:103px;top:50px;" width="11" height="9" viewBox="0 0 11 9"><rect x="0.5" y="0.5" width="10" height="8" fill="#fafafa" stroke="#666" stroke-width="1"/><path d="M0.5 3 H10.5" stroke="#666" stroke-width="1"/><path d="M2.2 4.6 H4.8 V7 H2.2 Z M6.2 4.6 H8.8 V7 H6.2 Z" fill="#fff" stroke="#888" stroke-width="0.6"/></svg>
<svg style="left:116.2px;top:52.9px;" width="6" height="4" viewBox="0 0 6 4"><path d="M1.1 1.1 L3 3 L4.9 1.1" fill="none" stroke="#3c3c3c" stroke-width="0.95"/></svg>
<svg style="left:103px;top:65.5px;" width="11" height="10.5" viewBox="0 0 11 10.5"><rect x="0.5" y="2" width="10" height="8" fill="#fafafa" stroke="#666" stroke-width="1"/><path d="M0.5 4.6 H10.5" stroke="#888" stroke-width="0.8"/><rect x="6" y="3" width="3.6" height="2.4" fill="#ddd"/><path d="M1 2.6 C2.2 0.6 5.2 1 5.6 3.8 M0.6 0.4 V2.8 H3" fill="none" stroke="#2b7cd3" stroke-width="1.1"/></svg>
<svg style="left:103px;top:81.8px;" width="11" height="12" viewBox="0 0 11 12"><rect x="0.2" y="0" width="10.6" height="2" fill="#7ac596"/><rect x="0.6" y="3.4" width="9.8" height="8" fill="#f8f8f8" stroke="#666" stroke-width="1.1"/><path d="M0.6 5.6 H10.4" stroke="#777" stroke-width="0.9"/></svg>
<svg style="left:116.2px;top:85.5px;" width="6" height="4" viewBox="0 0 6 4"><path d="M1.1 1.1 L3 3 L4.9 1.1" fill="none" stroke="#3c3c3c" stroke-width="0.95"/></svg>
<span class="t" style="left:87.84px;top:99.33px;font-size:8.00px;line-height:11px;height:11px;color:#3c3c3c;transform:scaleX(0.941);">Slides</span>
<div class="sep" style="left:130px"></div>
<div class="abs" style="left:136.5px;top:53px;width:99px;height:15.6px;background:#e1dfdd;border:1px solid #d4d2d0"></div>
<div class="abs" style="left:235.3px;top:53px;width:31.6px;height:15.6px;background:#e1dfdd;border:1px solid #d0cecc"></div>
<svg style="left:227.8px;top:59.5px;" width="6" height="4" viewBox="0 0 6 4"><path d="M1.1 1.1 L3 3 L4.9 1.1" fill="none" stroke="#b8b6b4" stroke-width="0.95"/></svg>
<svg style="left:259.4px;top:59.5px;" width="6" height="4" viewBox="0 0 6 4"><path d="M1.1 1.1 L3 3 L4.9 1.1" fill="none" stroke="#b8b6b4" stroke-width="0.95"/></svg>
<span class="t" style="left:269.79px;top:52.96px;font-size:10.50px;line-height:14px;height:14px;color:#a09e9c;transform:scaleX(1.069);">A</span>
<svg style="left:276.5px;top:55px;" width="4" height="3" viewBox="0 0 4 3"><path d="M0.3 2.4 L2 0.7 L3.7 2.4" fill="none" stroke="#a09e9c" stroke-width="0.8"/></svg>
<span class="t" style="left:285.83px;top:55.19px;font-size:8.40px;line-height:11px;height:11px;color:#a09e9c;transform:scaleX(1.162);">A</span>
<svg style="left:291.6px;top:55.2px;" width="4" height="3" viewBox="0 0 4 3"><path d="M0.3 0.6 L2 2.3 L3.7 0.6" fill="none" stroke="#a09e9c" stroke-width="0.8"/></svg>
<div class="abs" style="left:300.4px;top:53.4px;width:1px;height:14.5px;background:#d8d6d4"></div>
<span class="t" style="left:305.19px;top:52.96px;font-size:10.50px;line-height:14px;height:14px;color:#a09e9c;transform:scaleX(0.955);">A</span>
<svg style="left:309.5px;top:59px;" width="7" height="7" viewBox="0 0 7 7"><path d="M2.6 6.4 L0.6 4.4 L4.4 0.6 L6.4 2.6 Z M1.8 3.2 L3.8 5.2" fill="#f3f2f1" stroke="#a09e9c" stroke-width="0.8" stroke-linejoin="round"/></svg>
<span class="t" style="left:141.81px;top:75.61px;font-size:9.50px;line-height:12px;height:12px;color:#a09e9c;font-weight:700;transform:scaleX(0.800);">B</span>
<span class="t" style="left:157.31px;top:75.61px;font-size:9.50px;line-height:12px;height:12px;color:#a09e9c;transform:scaleX(1.103);font-style:italic;font-family:'Liberation Serif',serif;">I</span>
<span class="t" style="left:171.01px;top:75.61px;font-size:9.50px;line-height:12px;height:12px;color:#a09e9c;transform:scaleX(0.873);">U</span>
<div class="abs" style="left:171.2px;top:86.3px;width:5.5px;height:0.9px;background:#a09e9c"></div>
<span class="t" style="left:186.21px;top:75.61px;font-size:9.50px;line-height:12px;height:12px;color:#a09e9c;transform:scaleX(0.883);">S</span>
<span class="t" style="left:200.15px;top:78.20px;font-size:7.50px;line-height:10px;height:10px;color:#a09e9c;transform:scaleX(1.055);">ab</span>
<div class="abs" style="left:199.2px;top:83px;width:10.4px;height:1px;background:#a09e9c"></div>
<span class="t" style="left:214.23px;top:74.25px;font-size:8.50px;line-height:12px;height:12px;color:#a09e9c;transform:scaleX(1.064);">AV</span>
<svg style="left:214.4px;top:84.2px;" width="11" height="3" viewBox="0 0 11 3"><path d="M0.6 1.5 H10.4 M2 0.2 L0.6 1.5 L2 2.8 M9 0.2 L10.4 1.5 L9 2.8" fill="none" stroke="#a09e9c" stroke-width="0.7"/></svg>
<svg style="left:227.4px;top:80.6px;" width="6" height="4" viewBox="0 0 6 4"><path d="M1.1 1.1 L3 3 L4.9 1.1" fill="none" stroke="#b8b6b4" stroke-width="0.95"/></svg>
<span class="t" style="left:238.83px;top:76.59px;font-size:8.40px;line-height:11px;height:11px;color:#a09e9c;transform:scaleX(1.141);">Aa</span>
<svg style="left:252px;top:80.6px;" width="6" height="4" viewBox="0 0 6 4"><path d="M1.1 1.1 L3 3 L4.9 1.1" fill="none" stroke="#b8b6b4" stroke-width="0.95"/></svg>
<div class="abs" style="left:264.3px;top:75.5px;width:1px;height:14px;background:#d8d6d4"></div>
<svg style="left:270px;top:77px;" width="11" height="11" viewBox="0 0 11 11"><path d="M3 6.2 L7.6 1 L9.6 2.8 L5 8 Z M3 6.2 L2 8.6 L5 8" fill="none" stroke="#a09e9c" stroke-width="0.9" stroke-linejoin="round"/><rect x="0" y="8.3" width="10.6" height="2.4" fill="#aaa8a6"/></svg>
<svg style="left:284.2px;top:80.6px;" width="6" height="4" viewBox="0 0 6 4"><path d="M1.1 1.1 L3 3 L4.9 1.1" fill="none" stroke="#b8b6b4" stroke-width="0.95"/></svg>
<span class="t" style="left:297.11px;top:74.61px;font-size:9.50px;line-height:12px;height:12px;color:#a09e9c;transform:scaleX(1.135);">A</span>
<div class="abs" style="left:295px;top:85.3px;width:11px;height:2.4px;background:#aaa8a6"></div>
<svg style="left:309.6px;top:80.6px;" width="6" height="4" viewBox="0 0 6 4"><path d="M1.1 1.1 L3 3 L4.9 1.1" fill="none" stroke="#b8b6b4" stroke-width="0.95"/></svg>
<span class="t" style="left:213.84px;top:99.33px;font-size:8.00px;line-height:11px;height:11px;color:#3c3c3c;transform:scaleX(1.024);">Font</span>
<svg style="left:315.5px;top:102.3px;" width="6" height="6" viewBox="0 0 6 6"><path d="M0.5 3 V0.5 H3" fill="none" stroke="#8c8a88" stroke-width="0.8"/><path d="M2 2 L5.4 5.4 M5.5 2.6 V5.5 H2.6" fill="none" stroke="#8c8a88" stroke-width="0.8"/></svg>
<div class="sep" style="left:323px"></div>
<svg style="left:331px;top:55.3px;" width="10.8" height="9.8" viewBox="0 0 10.8 9.8"><path d="M3.6 0.6 H10.8 M3.6 4.7 H10.8 M3.6 8.8 H10.8 " stroke="#a09e9c" stroke-width="0.9" fill="none"/></svg>
<svg style="left:331px;top:55.3px;" width="2" height="9.8" viewBox="0 0 2 9.8"><path d="M0.2 0.6 H2 M0.2 4.7 H2 M0.2 8.8 H2 " stroke="#a09e9c" stroke-width="1.4" fill="none"/></svg>
<svg style="left:345.8px;top:58.7px;" width="6" height="4" viewBox="0 0 6 4"><path d="M1.1 1.1 L3 3 L4.9 1.1" fill="none" stroke="#b8b6b4" stroke-width="0.95"/></svg>
<svg style="left:356.6px;top:55.3px;" width="10.8" height="9.8" viewBox="0 0 10.8 9.8"><path d="M3.6 0.6 H10.8 M3.6 4.7 H10.8 M3.6 8.8 H10.8 " stroke="#a09e9c" stroke-width="0.9" fill="none"/></svg>
<svg style="left:356.6px;top:55.3px;" width="1.8" height="9.8" viewBox="0 0 1.8 9.8"><path d="M0.4 0.6 H1.8 M0.4 4.7 H1.8 M0.4 8.8 H1.8 " stroke="#a09e9c" stroke-width="2.2" fill="none"/></svg>
<svg style="left:371.4px;top:58.7px;" width="6" height="4" viewBox="0 0 6 4"><path d="M1.1 1.1 L3 3 L4.9 1.1" fill="none" stroke="#b8b6b4" stroke-width="0.95"/></svg>
<svg style="left:385px;top:55.3px;" width="9.8" height="10" viewBox="0 0 9.8 10"><path d="M0 0.6 H9.8 M4.6 3.4 H9.8 M4.6 6.2 H9.8 M0 9 H9.8 " stroke="#a09e9c" stroke-width="0.9" fill="none"/></svg>
<svg style="left:385px;top:58px;" width="4" height="4" viewBox="0 0 4 4"><path d="M3.6 2 H0.4 M1.8 0.6 L0.4 2 L1.8 3.4" fill="none" stroke="#a09e9c" stroke-width="0.8"/></svg>
<svg style="left:400px;top:55.3px;" width="9.8" height="10" viewBox="0 0 9.8 10"><path d="M0 0.6 H9.8 M4.6 3.4 H9.8 M4.6 6.2 H9.8 M0 9 H9.8 " stroke="#a09e9c" stroke-width="0.9" fill="none"/></svg>
<svg style="left:400px;top:58px;" width="4" height="4" viewBox="0 0 4 4"><path d="M0.2 2 H3.4 M2 0.6 L3.4 2 L2 3.4" fill="none" stroke="#a09e9c" stroke-width="0.8"/></svg>
<svg style="left:420.5px;top:55.3px;" width="7.4" height="10" viewBox="0 0 7.4 10"><path d="M0 0.6 H7.4 M0 3.4 H7.4 M0 6.2 H7.4 M0 9 H7.4 " stroke="#a09e9c" stroke-width="0.9" fill="none"/></svg>
<svg style="left:416px;top:55px;" width="4" height="10.5" viewBox="0 0 4 10.5"><path d="M2 0.6 V9.8 M0.6 2 L2 0.6 L3.4 2 M0.6 8.4 L2 9.8 L3.4 8.4" fill="none" stroke="#a09e9c" stroke-width="0.8"/></svg>
<svg style="left:429.9px;top:58.7px;" width="6" height="4" viewBox="0 0 6 4"><path d="M1.1 1.1 L3 3 L4.9 1.1" fill="none" stroke="#b8b6b4" stroke-width="0.95"/></svg>
<svg style="left:332px;top:77.6px;" width="9.8" height="9.8" viewBox="0 0 9.8 9.8"><path d="M0 0.4 H9.8 M0 3.2 H7 M0 6 H9.8 M0 8.8 H7 " stroke="#a09e9c" stroke-width="0.9" fill="none"/></svg>
<svg style="left:347px;top:77.6px;" width="10" height="9.8" viewBox="0 0 10 9.8"><path d="M0 0.4 H10 M1.6 3.2 H8.4 M0 6 H10 M1.6 8.8 H8.4 " stroke="#a09e9c" stroke-width="0.9" fill="none"/></svg>
<svg style="left:362.2px;top:77.6px;" width="10" height="9.8" viewBox="0 0 10 9.8"><path d="M0 0.4 H10 M3 3.2 H10 M0 6 H10 M3 8.8 H10 " stroke="#a09e9c" stroke-width="0.9" fill="none"/></svg>
<svg style="left:377.3px;top:77.6px;" width="9.8" height="9.8" viewBox="0 0 9.8 9.8"><path d="M0 0.4 H9.8 M0 3.2 H9.8 M0 6 H9.8 M0 8.8 H9.8 " stroke="#a09e9c" stroke-width="0.9" fill="none"/></svg>
<svg style="left:390px;top:80.6px;" width="6" height="4" viewBox="0 0 6 4"><path d="M1.1 1.1 L3 3 L4.9 1.1" fill="none" stroke="#b8b6b4" stroke-width="0.95"/></svg>
<span class="t" style="left:408.04px;top:76.73px;font-size:8.00px;line-height:11px;height:11px;color:#a09e9c;transform:scaleX(1.233);">¶</span>
<svg style="left:405px;top:80px;" width="4" height="5" viewBox="0 0 4 5"><path d="M0.6 0.6 L3 2.5 L0.6 4.4" fill="none" stroke="#a09e9c" stroke-width="0.8"/></svg>
<span class="t" style="left:420.04px;top:76.73px;font-size:8.00px;line-height:11px;height:11px;color:#a09e9c;transform:scaleX(1.233);">¶</span>
<svg style="left:424.5px;top:80px;" width="4" height="5" viewBox="0 0 4 5"><path d="M3.2 0.6 L0.8 2.5 L3.2 4.4" fill="none" stroke="#a09e9c" stroke-width="0.8"/></svg>
<svg style="left:436.8px;top:79.3px;" width="10" height="6.5" viewBox="0 0 10 6.5"><path d="M0 0.5 H4 M0 2.3 H4 M0 4.1 H4 M0 5.9 H4 M5.6 0.5 H9.6 M5.6 2.3 H9.6 M5.6 4.1 H9.6 M5.6 5.9 H9.6" stroke="#c6c4c2" stroke-width="1" fill="none"/></svg>
<svg style="left:449px;top:80.6px;" width="6" height="4" viewBox="0 0 6 4"><path d="M1.1 1.1 L3 3 L4.9 1.1" fill="none" stroke="#b8b6b4" stroke-width="0.95"/></svg>
<svg style="left:461.5px;top:49.5px;" width="10" height="11" viewBox="0 0 10 11"><path d="M1.6 0.2 V10 M0.2 8.4 L1.6 10 L3 8.4 M7 5.6 V10 M5.6 8.4 L7 10 L8.4 8.4" fill="none" stroke="#a09e9c" stroke-width="0.9"/></svg>
<span class="t" style="left:465.36px;top:47.37px;font-size:7.00px;line-height:10px;height:10px;color:#a09e9c;transform:scaleX(1.199);">A</span>
<svg style="left:473.6px;top:52.9px;" width="6" height="4" viewBox="0 0 6 4"><path d="M1.1 1.1 L3 3 L4.9 1.1" fill="none" stroke="#b8b6b4" stroke-width="0.95"/></svg>
<svg style="left:460px;top:65.6px;" width="12" height="10.5" viewBox="0 0 12 10.5"><path d="M3 1.6 H0.6 V8.8 H3 M9 1.6 H11.4 V8.8 H9" fill="none" stroke="#a09e9c" stroke-width="0.9"/><path d="M6 0.2 V10.2 M4.8 1.6 L6 0.2 L7.2 1.6 M4.8 8.8 L6 10.2 L7.2 8.8 M4.2 5.2 H7.8" fill="none" stroke="#a09e9c" stroke-width="0.8"/></svg>
<svg style="left:473.6px;top:69.3px;" width="6" height="4" viewBox="0 0 6 4"><path d="M1.1 1.1 L3 3 L4.9 1.1" fill="none" stroke="#b8b6b4" stroke-width="0.95"/></svg>
<svg style="left:460.5px;top:83px;" width="12" height="9" viewBox="0 0 12 9"><path d="M0.4 0.6 H6 L4 3 L6 5.4 H0.4 L2.4 3 Z" fill="#bdbbb9"/><rect x="4.4" y="3.6" width="7" height="4.8" fill="#dcdad8" stroke="#a09e9c" stroke-width="0.9"/><path d="M4.4 5.4 H11.4" stroke="#a09e9c" stroke-width="0.7"/></svg>
<svg style="left:473.6px;top:85.5px;" width="6" height="4" viewBox="0 0 6 4"><path d="M1.1 1.1 L3 3 L4.9 1.1" fill="none" stroke="#b8b6b4" stroke-width="0.95"/></svg>
<span class="t" style="left:382.54px;top:99.33px;font-size:8.00px;line-height:11px;height:11px;color:#3c3c3c;transform:scaleX(0.969);">Paragraph</span>
<svg style="left:480.2px;top:102.3px;" width="6" height="6" viewBox="0 0 6 6"><path d="M0.5 3 V0.5 H3" fill="none" stroke="#8c8a88" stroke-width="0.8"/><path d="M2 2 L5.4 5.4 M5.5 2.6 V5.5 H2.6" fill="none" stroke="#8c8a88" stroke-width="0.8"/></svg>
<div class="sep" style="left:488.3px"></div>
<svg style="left:498.5px;top:49.5px;" width="20" height="21" viewBox="0 0 20 21"><rect x="0.7" y="0.7" width="12.6" height="12.2" fill="#6db3f2" stroke="#2b7cd3" stroke-width="1"/><circle cx="12.6" cy="12.8" r="6.8" fill="#fcfcfc" stroke="#666" stroke-width="1.1"/></svg>
<span class="t" style="left:495.43px;top:72.79px;font-size:8.40px;line-height:11px;height:11px;color:#3c3c3c;transform:scaleX(0.905);">Shapes</span>
<svg style="left:505.2px;top:87px;" width="6" height="4" viewBox="0 0 6 4"><path d="M1.1 1.1 L3 3 L4.9 1.1" fill="none" stroke="#3c3c3c" stroke-width="0.95"/></svg>
<svg style="left:529px;top:49.5px;" width="20" height="20.5" viewBox="0 0 20 20.5"><rect x="3.8" y="3.8" width="12.6" height="12.6" fill="#f8d48a" stroke="#e8912d" stroke-width="1"/><rect x="0.6" y="0.6" width="8" height="7.6" fill="#f4f4f4" stroke="#777" stroke-width="1"/><rect x="11.4" y="11.6" width="8" height="7.8" fill="#fcfcfc" stroke="#666" stroke-width="1"/></svg>
<span class="t" style="left:524.43px;top:72.79px;font-size:8.40px;line-height:11px;height:11px;color:#3c3c3c;transform:scaleX(0.970);">Arrange</span>
<svg style="left:535.2px;top:87px;" width="6" height="4" viewBox="0 0 6 4"><path d="M1.1 1.1 L3 3 L4.9 1.1" fill="none" stroke="#3c3c3c" stroke-width="0.95"/></svg>
<svg style="left:561px;top:50px;" width="20.5" height="19.5" viewBox="0 0 20.5 19.5"><rect x="0.6" y="0.6" width="18.6" height="17.8" rx="1" fill="#ecebe9" stroke="#c4c2c0" stroke-width="1"/><path d="M19.6 6.6 L11.4 15.6 L9.4 16.4 C8 18.4 7.2 18.8 6 18.8 C7.4 17.6 7.4 16 8.6 14.8 L10 14.4 L18.6 5.6 Z" fill="#c8c6c4" stroke="#bab8b6" stroke-width="0.6"/></svg>
<span class="t" style="left:560.13px;top:72.79px;font-size:8.40px;line-height:11px;height:11px;color:#a09e9c;transform:scaleX(0.990);">Quick</span>
<span class="t" style="left:556.83px;top:83.89px;font-size:8.40px;line-height:11px;height:11px;color:#a09e9c;transform:scaleX(0.899);">Styles</span>
<svg style="left:579.2px;top:87px;" width="6" height="4" viewBox="0 0 6 4"><path d="M1.1 1.1 L3 3 L4.9 1.1" fill="none" stroke="#b8b6b4" stroke-width="0.95"/></svg>
<svg style="left:589.3px;top:48.8px;" width="11" height="11" viewBox="0 0 11 11"><path d="M2 5.2 L5.8 1.2 L9.2 4.6 L5.4 8.2 Z" fill="none" stroke="#a09e9c" stroke-width="0.9" stroke-linejoin="round"/><path d="M5.8 1.2 L4.4 0.2 M9.4 5 C10.4 6.2 10.4 7 9.6 7.4 C8.8 7 8.8 6.2 9.4 5 Z" fill="#a09e9c" stroke="#a09e9c" stroke-width="0.7"/><rect x="0" y="8.6" width="10.8" height="2.2" fill="#aaa8a6"/></svg>
<svg style="left:603.4px;top:52.2px;" width="6" height="4" viewBox="0 0 6 4"><path d="M1.1 1.1 L3 3 L4.9 1.1" fill="none" stroke="#b8b6b4" stroke-width="0.95"/></svg>
<svg style="left:589.3px;top:65px;" width="11" height="11" viewBox="0 0 11 11"><path d="M0.6 1.6 H6.4 M0.6 1.6 V7 H5" fill="none" stroke="#a09e9c" stroke-width="0.9"/><path d="M4.4 6.6 L9 1 L10.6 2.4 L6 8 L4 8.6 Z" fill="#e4e2e0" stroke="#a09e9c" stroke-width="0.8" stroke-linejoin="round"/><rect x="0" y="8.6" width="10.8" height="2.2" fill="#aaa8a6"/></svg>
<svg style="left:603.4px;top:68.1px;" width="6" height="4" viewBox="0 0 6 4"><path d="M1.1 1.1 L3 3 L4.9 1.1" fill="none" stroke="#b8b6b4" stroke-width="0.95"/></svg>
<svg style="left:589.3px;top:81.3px;" width="11" height="9" viewBox="0 0 11 9"><path d="M3.4 0.6 H9.6 L7.4 4.8 H1 Z" fill="#e6e4e2" stroke="#a09e9c" stroke-width="0.9" stroke-linejoin="round"/><path d="M1 4.8 V7.4 L7.4 7.8 V4.8 M7.4 7.8 L9.6 3.6 V0.6" fill="#c6c4c2" stroke="#a09e9c" stroke-width="0.9" stroke-linejoin="round"/></svg>
<svg style="left:602px;top:84.1px;" width="6" height="4" viewBox="0 0 6 4"><path d="M1.1 1.1 L3 3 L4.9 1.1" fill="none" stroke="#b8b6b4" stroke-width="0.95"/></svg>
<span class="t" style="left:532.64px;top:99.33px;font-size:8.00px;line-height:11px;height:11px;color:#3c3c3c;transform:scaleX(1.029);">Drawing</span>
<svg style="left:610.2px;top:102.3px;" width="6" height="6" viewBox="0 0 6 6"><path d="M0.5 3 V0.5 H3" fill="none" stroke="#8c8a88" stroke-width="0.8"/><path d="M2 2 L5.4 5.4 M5.5 2.6 V5.5 H2.6" fill="none" stroke="#8c8a88" stroke-width="0.8"/></svg>
<div class="sep" style="left:618px"></div>
<div class="abs" style="left:626px;top:47px;width:22px;height:22px;background:#fff;border:1px solid #d2d0ce"></div>
<svg style="left:631.5px;top:51.5px;" width="12" height="12" viewBox="0 0 12 12"><circle cx="7.2" cy="4.6" r="3.8" fill="none" stroke="#555" stroke-width="1"/><path d="M4.6 7.4 L0.8 11.2" stroke="#555" stroke-width="1.2"/></svg>
<span class="t" style="left:623.83px;top:71.99px;font-size:8.40px;line-height:11px;height:11px;color:#3c3c3c;transform:scaleX(0.996);">Editing</span>
<svg style="left:633.5px;top:85.2px;" width="6" height="4" viewBox="0 0 6 4"><path d="M1.1 1.1 L3 3 L4.9 1.1" fill="none" stroke="#3c3c3c" stroke-width="0.95"/></svg>
<div class="sep" style="left:655px"></div>
<svg style="left:667.5px;top:49.5px;" width="15" height="20.5" viewBox="0 0 15 20.5"><path d="M0.8 10 V12 a6.2 6.2 0 0 0 12.6 0 V10" fill="none" stroke="#777" stroke-width="1"/><path d="M7.1 18.2 V20 M4.6 20 H9.6" stroke="#999" stroke-width="0.9"/><rect x="3" y="0.6" width="8.4" height="14" rx="1.6" fill="#6db3f2" stroke="#2b7cd3" stroke-width="1"/></svg>
<span class="t" style="left:662.63px;top:72.79px;font-size:8.40px;line-height:11px;height:11px;color:#3c3c3c;transform:scaleX(0.982);">Dictate</span>
<svg style="left:671.8px;top:87px;" width="6" height="4" viewBox="0 0 6 4"><path d="M1.1 1.1 L3 3 L4.9 1.1" fill="none" stroke="#3c3c3c" stroke-width="0.95"/></svg>
<span class="t" style="left:665.54px;top:99.33px;font-size:8.00px;line-height:11px;height:11px;color:#3c3c3c;transform:scaleX(0.960);">Voice</span>
<div class="sep" style="left:694.5px"></div>
<svg style="left:704px;top:48.8px;" width="21.5" height="18.5" viewBox="0 0 21.5 18.5"><rect x="1.8" y="3.8" width="18.6" height="13.8" fill="#fafafa" stroke="#666" stroke-width="1.2"/><path d="M1.8 7.4 H20.4 M14.4 7.4 V17.6" stroke="#888" stroke-width="1.1" fill="none"/><rect x="15" y="8" width="5" height="9" fill="#e4e4e4"/><path d="M4.6 0.2 H8.4 L6.2 4.8 H8.8 L2.2 12.4 L3.6 7.2 H0.8 Z" fill="#f6a53a" stroke="#e8912d" stroke-width="0.7" stroke-linejoin="round"/></svg>
<span class="t" style="left:702.83px;top:72.79px;font-size:8.40px;line-height:11px;height:11px;color:#3c3c3c;transform:scaleX(0.955);">Design</span>
<span class="t" style="left:705.83px;top:83.89px;font-size:8.40px;line-height:11px;height:11px;color:#3c3c3c;transform:scaleX(0.902);">Ideas</span>
<span class="t" style="left:698.84px;top:99.33px;font-size:8.00px;line-height:11px;height:11px;color:#3c3c3c;transform:scaleX(0.993);">Designer</span>
<div class="sep" style="left:734.3px"></div>
<svg style="left:754.6px;top:103.6px;" width="7.2" height="4.4" viewBox="0 0 7.2 4.4"><path d="M0.5 3.9 L3.6 0.8 L6.7 3.9" fill="none" stroke="#444" stroke-width="1.1"/></svg>
<span class="t" style="left:6.35px;top:456.60px;font-size:7.50px;line-height:10px;height:10px;color:#505050;transform:scaleX(1.036);">Slide 8 of 10</span>
<span class="t" style="left:71.45px;top:456.60px;font-size:7.50px;line-height:10px;height:10px;color:#505050;transform:scaleX(1.039);">English (United States)</span>
<svg style="left:468.6px;top:457.6px;" width="9.6" height="8" viewBox="0 0 9.6 8"><path d="M0 3.4 H9.4 M0 5.4 H9.4 M0 7.4 H6" stroke="#555" stroke-width="0.9" fill="none"/><path d="M3 1.6 L4.7 0.3 L6.4 1.6" stroke="#555" stroke-width="0.8" fill="none"/></svg>
<span class="t" style="left:480.65px;top:456.57px;font-size:7.60px;line-height:11px;height:11px;color:#444;transform:scaleX(1.028);-webkit-text-stroke:0.2px #444;">Notes</span>
<div class="abs" style="left:514.5px;top:455px;width:26.8px;height:14px;background:#c8c6c4"></div>
<svg style="left:523px;top:457.6px;" width="10" height="8.6" viewBox="0 0 10 8.6"><rect x="0.5" y="0.5" width="9" height="7.6" fill="none" stroke="#333" stroke-width="1"/><path d="M2.6 0.5 V8.1 M2.6 5.6 H9.5" stroke="#333" stroke-width="0.9" fill="none"/><rect x="4" y="2" width="4" height="2.2" fill="none" stroke="#333" stroke-width="0.7"/></svg>
<svg style="left:549.8px;top:457.6px;" width="10.4" height="8.6" viewBox="0 0 10.4 8.6"><path d="M0.5 0.5 H4 V3.4 H0.5 Z M6.2 0.5 H9.8 V3.4 H6.2 Z M0.5 5.2 H4 V8.1 H0.5 Z M6.2 5.2 H9.8 V8.1 H6.2 Z" fill="none" stroke="#555" stroke-width="0.9"/></svg>
<svg style="left:577.8px;top:457.4px;" width="9.4" height="9" viewBox="0 0 9.4 9"><path d="M0.5 0.8 H4.1 V8 H0.5 Z M5.3 0.8 H8.9 V8 H5.3 Z" fill="none" stroke="#555" stroke-width="0.9"/><path d="M2.3 2 V8.6 M7.1 2 V8.6" stroke="#777" stroke-width="0.7"/></svg>
<svg style="left:605.2px;top:457.4px;" width="9.6" height="9.2" viewBox="0 0 9.6 9.2"><path d="M0 0.5 H9.4" stroke="#555" stroke-width="1"/><path d="M1 0.8 V5.2 H8.4 V0.8" fill="none" stroke="#555" stroke-width="0.9"/><path d="M4.7 5.2 V8.4 M2.6 8.6 H6.8" stroke="#555" stroke-width="0.9"/></svg>
<div class="abs" style="left:628.3px;top:461.3px;width:5px;height:1px;background:#555"></div>
<div class="abs" style="left:636.8px;top:461.3px;width:68.6px;height:1px;background:#b4b2b0"></div>
<div class="abs" style="left:671px;top:459.4px;width:1px;height:4.8px;background:#b4b2b0"></div>
<div class="abs" style="left:657.7px;top:457.7px;width:3.2px;height:7.4px;background:#666"></div>
<svg style="left:708.8px;top:459.2px;" width="5.2" height="5.2" viewBox="0 0 5.2 5.2"><path d="M0 2.6 H5.2 M2.6 0 V5.2" stroke="#555" stroke-width="1"/></svg>
<span class="t" style="left:723.55px;top:456.90px;font-size:7.50px;line-height:10px;height:10px;color:#505050;transform:scaleX(0.952);">66%</span>
<svg style="left:746px;top:456.4px;" width="10.6" height="10.4" viewBox="0 0 10.6 10.4"><rect x="3.1" y="3.2" width="4.4" height="4" fill="none" stroke="#555" stroke-width="0.9"/><path d="M5.3 0 L3.5 1.9 H7.1 Z M5.3 10.4 L3.5 8.5 H7.1 Z M0 5.2 L1.9 3.4 V7 Z M10.6 5.2 L8.7 3.4 V7 Z" fill="#555"/></svg>
<div class="frame" style="left:0;top:24px;width:1px;height:446px;background:#c9694f"></div>
<div class="frame" style="left:767px;top:24px;width:1px;height:446px;background:#c9694f"></div>
<div class="frame" style="left:0;top:469px;width:768px;height:1px;background:#c9694f"></div>
</div>
</body>
</html>
